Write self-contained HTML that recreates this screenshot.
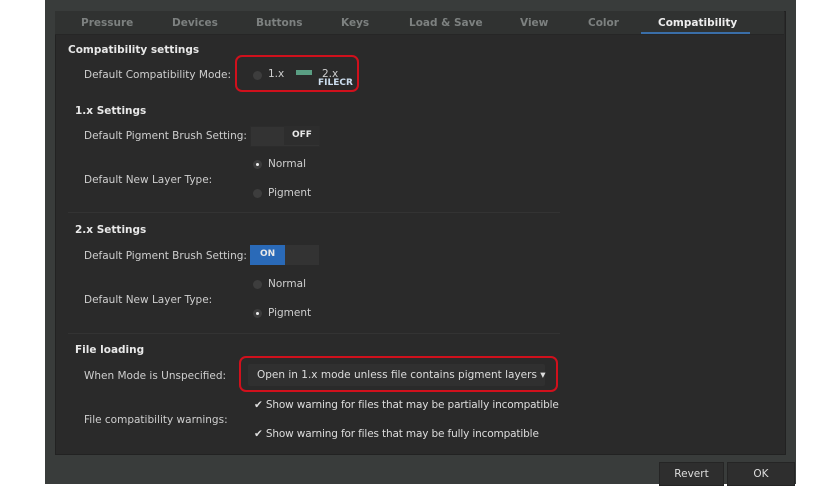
<!DOCTYPE html><html><head><style>
body{margin:0;width:836px;height:484px;background:#fff;position:relative;overflow:hidden;font-family:"DejaVu Sans","Liberation Sans",sans-serif;font-size:10.5px;color:#cfcfcf}
.a{position:absolute;white-space:nowrap}
.win{position:absolute;left:45px;top:0;width:751px;height:484px;background:#393c3b}
.pan{position:absolute;left:55px;top:11px;width:729px;height:442px;background:#2a2a2a;border:1px solid #222}
.tabs{position:absolute;left:55px;top:11px;width:729px;height:23px;background:#303231;border-bottom:1px solid #262626}
.tab{position:absolute;top:17px;font-weight:bold;color:#7d8180;font-size:10.5px}
.b{font-weight:bold;color:#e8e8e8}
.r{position:absolute;width:9px;height:9px;border-radius:50%;background:#3d3d3d}
.r.on::after{content:"";position:absolute;left:3px;top:3px;width:3px;height:3px;border-radius:50%;background:#eee}
.sep{position:absolute;left:68px;width:492px;height:1px;background:#333}
.red{position:absolute;border:2.5px solid #d0101c;border-radius:7px}
.btn{position:absolute;top:462px;height:22px;background:#2e2e2e;border:1px solid #252525;color:#ddd;text-align:center;line-height:22px;font-size:10.5px}
.chk{letter-spacing:-0.15px}
</style></head><body>
<div class="win"></div><div class="pan"></div><div class="tabs"></div>
<div class="tab" style="left:81px">Pressure</div>
<div class="tab" style="left:172px">Devices</div>
<div class="tab" style="left:256px">Buttons</div>
<div class="tab" style="left:341px">Keys</div>
<div class="tab" style="left:409px">Load &amp; Save</div>
<div class="tab" style="left:520px">View</div>
<div class="tab" style="left:588px">Color</div>
<div class="tab" style="left:658px;color:#eee">Compatibility</div>
<div class="a" style="left:641px;top:32px;width:109px;height:2px;background:#3a6ea8"></div>

<div class="a b" style="left:68px;top:44px">Compatibility settings</div>
<div class="a" style="left:84px;top:69px">Default Compatibility Mode:</div>
<div class="r" style="left:253px;top:71px"></div><div class="a" style="left:268px;top:68px">1.x</div>
<div class="a" style="left:296px;top:70px;width:16px;height:5px;background:#5a9e83"></div>
<div class="a" style="left:322px;top:68px">2.x</div>
<div class="a" style="left:318px;top:78px;font-weight:bold;font-size:9px;color:#cde">FILECR</div>
<div class="red" style="left:235px;top:55px;width:120px;height:33px"></div>

<div class="a b" style="left:75px;top:105px">1.x Settings</div>
<div class="a" style="left:84px;top:130px">Default Pigment Brush Setting:</div>
<div class="a" style="left:250px;top:126px;width:68px;height:19px;background:#333;border:1px solid #2c2c2c"></div>
<div class="a" style="left:284px;top:126px;width:35px;height:19px;background:#2d2d2d"></div>
<div class="a b" style="left:292px;top:130px;font-size:9px">OFF</div>
<div class="a" style="left:84px;top:174px">Default New Layer Type:</div>
<div class="r on" style="left:253px;top:160px"></div><div class="a" style="left:268px;top:158px">Normal</div>
<div class="r" style="left:253px;top:189px"></div><div class="a" style="left:268px;top:187px">Pigment</div>
<div class="sep" style="top:212px"></div>

<div class="a b" style="left:75px;top:224px">2.x Settings</div>
<div class="a" style="left:84px;top:250px">Default Pigment Brush Setting:</div>
<div class="a" style="left:250px;top:245px;width:35px;height:20px;background:#2a6ab8"></div>
<div class="a" style="left:285px;top:245px;width:34px;height:20px;background:#333"></div>
<div class="a b" style="left:260px;top:249px;font-size:9px">ON</div>
<div class="a" style="left:84px;top:294px">Default New Layer Type:</div>
<div class="r" style="left:253px;top:280px"></div><div class="a" style="left:268px;top:278px">Normal</div>
<div class="r on" style="left:253px;top:309px"></div><div class="a" style="left:268px;top:307px">Pigment</div>
<div class="sep" style="top:333px"></div>

<div class="a b" style="left:75px;top:344px">File loading</div>
<div class="a" style="left:84px;top:370px">When Mode is Unspecified:</div>
<div class="a" style="left:248px;top:364px;width:297px;height:22px;background:#303030;border-radius:2px"></div>
<div class="a" style="left:257px;top:369px;color:#ddd">Open in 1.x mode unless file contains pigment layers ▾</div>
<div class="red" style="left:239px;top:356px;width:315px;height:32px"></div>
<div class="a chk" style="left:254px;top:399px;color:#ddd">✔ Show warning for files that may be partially incompatible</div>
<div class="a" style="left:84px;top:414px">File compatibility warnings:</div>
<div class="a chk" style="left:254px;top:428px;color:#ddd">✔ Show warning for files that may be fully incompatible</div>

<div class="btn" style="left:659px;width:63px">Revert</div>
<div class="btn" style="left:727px;width:66px">OK</div>
</body></html>
